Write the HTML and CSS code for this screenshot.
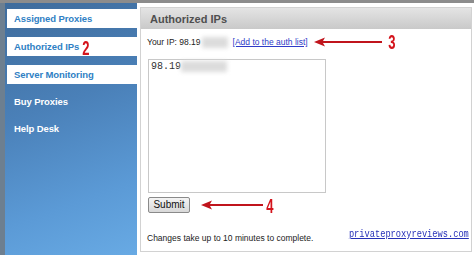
FILE: index.html
```html
<!DOCTYPE html>
<html>
<head>
<meta charset="utf-8">
<link rel="stylesheet" href="styles.css">
</head>
<body>
<div class="topbar"></div>
<div class="main">
  <nav class="sidebar">
    <div class="nav-item boxed">Assigned Proxies</div>
    <div class="nav-item boxed">Authorized IPs<span class="num num2">2</span></div>
    <div class="nav-item boxed">Server Monitoring</div>
    <div class="nav-item plain">Buy Proxies</div>
    <div class="nav-item plain">Help Desk</div>
  </nav>
  <section class="panel">
    <div class="panel-header">Authorized IPs</div>
    <div class="panel-body">
      <div class="ip-row">
        <span>Your IP: 98.19</span><span class="blur blur-ip"></span>
        <a class="auth-link" href="#">[Add to the auth list]</a>
        <svg class="arrow arrow3" width="68" height="10" viewBox="0 0 68 10"><path d="M0 5 L11 0.5 L9 4 L68 4 L68 6 L9 6 L11 9.5 Z" fill="#c0141c"/></svg>
        <span class="num num3">3</span>
      </div>
      <div class="ta">98.19<span class="blur blur-ta"></span></div>
      <div class="submit-row">
        <button class="submit">Submit</button>
        <svg class="arrow arrow4" width="62" height="10" viewBox="0 0 62 10"><path d="M0 5 L11 0.5 L9 4 L62 4 L62 6 L9 6 L11 9.5 Z" fill="#c0141c"/></svg>
        <span class="num num4">4</span>
      </div>
      <div class="footer-row">
        <span class="note">Changes take up to 10 minutes to complete.</span>
        <a class="site" href="#">privateproxyreviews.com</a>
      </div>
    </div>
  </section>
</div>
</body>
</html>
```
FILE: styles.css
```css
* { box-sizing: border-box; }
html, body { margin: 0; padding: 0; }
body {
  width: 474px;
  height: 255px;
  overflow: hidden;
  background: #fff;
  font-family: "Liberation Sans", Arial, sans-serif;
}
.topbar {
  height: 3px;
  background: #8c8c8c;
}
.main {
  display: flex;
  height: 252px;
}
.sidebar {
  width: 137px;
  flex: none;
  padding-top: 6px;
  background: linear-gradient(160deg, #3f6c9c 0%, #4a80b8 40%, #5b9ad6 75%, #68aae4 100%);
  border-left: 5px solid #6d7f90;
  padding-left: 2px;
  display: flex;
  flex-direction: column;
}
.nav-item {
  height: 19px;
  display: flex;
  align-items: center;
  padding-left: 7px;
  font-size: 9.5px;
  letter-spacing: -0.1px;
  font-weight: bold;
  position: relative;
}
.boxed {
  background: #fff;
  color: #2f7fc4;
  margin-bottom: 9px;
}
.boxed:nth-child(3) { margin-bottom: 8px; }
.plain {
  color: #fff;
  margin-bottom: 8px;
}
.num {
  color: #d4141c;
  font-weight: bold;
  font-size: 21px;
  letter-spacing: 0;
  display: inline-block;
  transform: scaleX(0.62);
  line-height: 1;
}
.num2 {
  position: absolute;
  left: 73px;
  top: 0px;
}
.panel {
  margin-left: 3px;
  margin-top: 4px;
  width: 332px;
  height: 245px;
  border: 1px solid #d2d2d2;
  display: flex;
  flex-direction: column;
}
.panel-header {
  height: 21px;
  background: linear-gradient(#e4e4e4, #c9c9c9);
  color: #4f4f4f;
  font-size: 11px;
  font-weight: bold;
  display: flex;
  align-items: center;
  padding-left: 9px;
}
.panel-body {
  padding: 6px 0 0 6px;
  display: flex;
  flex-direction: column;
  flex: 1;
  font-size: 8.5px;
  color: #222;
}
.ip-row {
  height: 14px;
  display: flex;
  align-items: center;
  position: relative;
}
.blur {
  display: inline-block;
  background: #dcdcdc;
  filter: blur(2px);
}
.blur-ip { width: 26px; height: 11px; margin-left: 1px; }
.auth-link {
  color: #2f3bc8;
  margin-left: 5px;
  text-decoration: underline;
}
.arrow3 { margin-left: 6px; }
.num3 {
  margin-left: 4px;
  margin-top: -2px;
}
.ta {
  margin-top: 10px;
  margin-left: 1px;
  width: 178px;
  height: 134px;
  border: 1px solid #c8c8c8;
  padding: 1px 2px;
  font-family: "Liberation Mono", "Courier New", monospace;
  font-size: 10px;
  color: #333;
  display: flex;
  align-items: flex-start;
}
.blur-ta { width: 46px; height: 11px; margin-top: 0; }
.submit-row {
  margin-top: 3px;
  margin-left: 1px;
  display: flex;
  align-items: center;
  height: 17px;
}
.submit {
  width: 42px;
  height: 16px;
  padding: 0;
  border: 1px solid #8a8a8a;
  border-radius: 2px;
  background: linear-gradient(#f4f4f4, #d8d8d8);
  font-family: "Liberation Sans", Arial, sans-serif;
  font-size: 10px;
  color: #111;
}
.arrow4 { margin-left: 11px; }
.num4 { margin-left: 1px; margin-top: 2px; }
.footer-row {
  margin-top: auto;
  margin-bottom: 8px;
  display: flex;
  align-items: flex-end;
  justify-content: space-between;
}
.note { font-size: 8.5px; color: #222; white-space: nowrap; }
.site {
  font-family: "Liberation Mono", "Courier New", monospace;
  font-size: 11px;
  color: #2630b8;
  text-decoration: underline;
  display: inline-block;
  white-space: nowrap;
  transform: scaleX(0.79);
  transform-origin: right center;
  margin-right: 2px;
  margin-bottom: 3px;
}
```
